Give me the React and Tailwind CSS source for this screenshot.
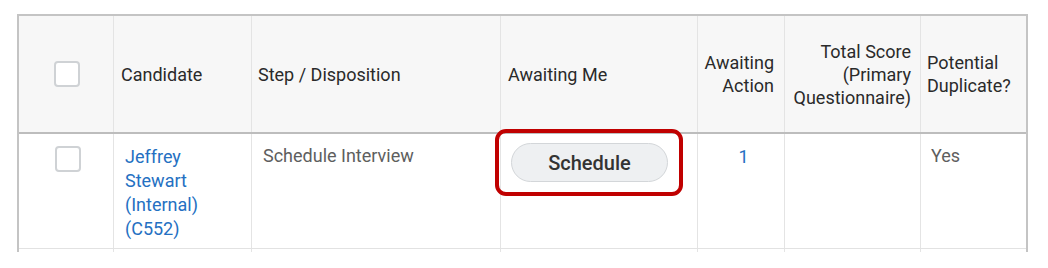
const cols = "grid grid-cols-[94px_138px_249px_197px_87px_136px_105px]";

function Box() {
  return (
    <div className="w-[26px] h-[26px] rounded-[4px] border-2 border-[#cfd2d5] bg-white" />
  );
}

export default function App() {
  return (
    <div
      className="w-[1048px] h-[268px] bg-white pt-[14px] pl-[17px]"
      style={{ fontFamily: "Roboto, 'Liberation Sans', sans-serif" }}
    >
      <div className="relative w-[1011px] h-[238px] overflow-hidden border-2 border-b-0 border-[#c4c4c4]">
        {/* header */}
        <div className={`${cols} h-[118px] bg-[#f7f7f7] border-b-2 border-[#bdbdbd] text-[18px] leading-[23px] text-[#2a2a2a]`}>
          <div className="flex items-center justify-center pl-[2px]">
            <Box />
          </div>
          <div className="flex items-center px-[7px] border-l border-[#e4e4e4]">Candidate</div>
          <div className="flex items-center px-[6px] border-l border-[#e4e4e4]">Step / Disposition</div>
          <div className="flex items-center px-[7px] border-l border-[#e4e4e4]">Awaiting Me</div>
          <div className="flex items-center justify-end text-right pr-[10px] border-l border-[#e4e4e4]">
            Awaiting
            <br />
            Action
          </div>
          <div className="flex items-center justify-end text-right pr-[9px] border-l border-[#e4e4e4]">
            Total Score
            <br />
            (Primary
            <br />
            Questionnaire)
          </div>
          <div className="flex items-center pl-[6px] border-l border-[#e4e4e4]">
            Potential
            <br />
            Duplicate?
          </div>
        </div>

        {/* row */}
        <div className={`${cols} h-[115px] border-b border-[#e2e2e2] text-[18px] leading-[24px] text-[#5e5e5e]`}>
          <div className="flex justify-center pt-[12px] pl-[3px]">
            <Box />
          </div>
          <div className="pt-[11px] px-[11px] border-l border-[#e4e4e4] text-[#2470c2]">
            Jeffrey
            <br />
            Stewart
            <br />
            (Internal)
            <br />
            (C552)
          </div>
          <div className="pt-[10px] px-[11px] border-l border-[#e4e4e4]">Schedule Interview</div>
          <div className="pt-[9px] pl-[10px] border-l border-[#e4e4e4]">
            <button className="w-[157px] h-[39px] rounded-full bg-[#eef0f2] border border-[#d3d6d9] text-[20px] font-medium text-[#333]">
              Schedule
            </button>
          </div>
          <div className="pt-[11px] text-center pl-[5px] border-l border-[#e4e4e4] text-[#2470c2]">1</div>
          <div className="border-l border-[#e4e4e4]" />
          <div className="pt-[10px] pl-[10px] border-l border-[#e4e4e4]">Yes</div>
        </div>

        {/* next row, cut off */}
        <div className={`${cols} h-[20px]`}>
          <div />
          <div className="border-l border-[#e4e4e4]" />
          <div className="border-l border-[#e4e4e4]" />
          <div className="border-l border-[#e4e4e4]" />
          <div className="border-l border-[#e4e4e4]" />
          <div className="border-l border-[#e4e4e4]" />
          <div className="border-l border-[#e4e4e4]" />
        </div>

        {/* highlight */}
        <div className="absolute left-[476px] top-[113px] w-[188px] h-[67px] rounded-[11px] border-[4px] border-[#c00000]" />
      </div>
    </div>
  );
}
